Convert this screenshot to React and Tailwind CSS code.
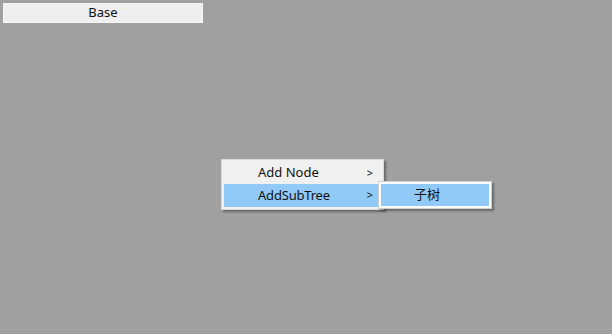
import React from "react";

const font = { fontFamily: '"Noto Sans", "Noto Sans CJK SC", sans-serif' };

export default function App() {
  return (
    <div
      className="relative w-[612px] h-[334px] bg-[#a0a0a0] overflow-hidden pt-[3px] pl-[3px]"
      style={font}
    >
      {/* Base node */}
      <div className="w-[200px] h-[20px] bg-[#efefef] border border-[#f6f6f6] flex items-center justify-center text-[13px] text-[#111]">
        Base
      </div>

      {/* Context menu */}
      <div className="absolute left-[221px] top-[159px] w-[163px] bg-[#f0f0f0] border border-[#d9d9d9] p-[2px] shadow-[2px_2px_2px_rgba(0,0,0,0.35)]">
        <div className="h-[22px] flex items-center pl-[34px] pr-[8px] text-[13px] text-[#111]">
          <span className="flex-1">Add Node</span>
          <span className="text-[11px]">&gt;</span>
        </div>
        <div className="h-[23px] flex items-center pl-[34px] pr-[8px] text-[13px] text-[#111] bg-[#91c9f7]">
          <span className="flex-1 tracking-[-0.2px]">AddSubTree</span>
          <span className="text-[11px]">&gt;</span>
        </div>
      </div>

      {/* Sub menu */}
      <div className="absolute left-[378px] top-[181px] w-[114px] h-[28px] bg-[#fbfbfb] border border-[#d0d0d0] p-[2px] shadow-[2px_2px_2px_rgba(0,0,0,0.35)]">
        <div className="h-full bg-[#91c9f7] flex items-center pl-[33px] text-[13px] text-[#111]">
          子树
        </div>
      </div>
    </div>
  );
}
